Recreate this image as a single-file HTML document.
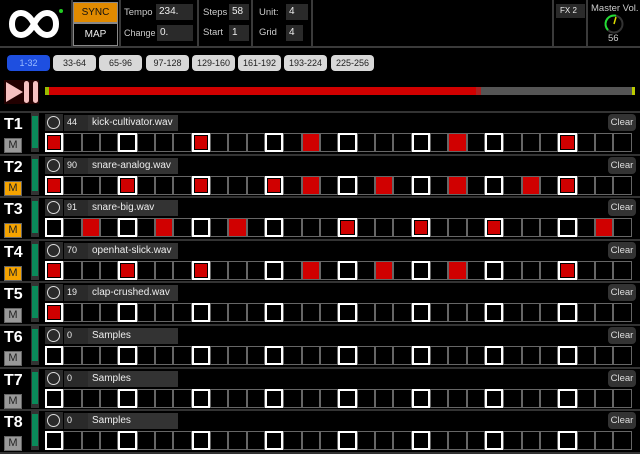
<!DOCTYPE html>
<html><head><style>
*{box-sizing:border-box;margin:0;padding:0}
body{width:640px;height:454px;background:#000;font-family:"Liberation Sans",sans-serif;position:relative;overflow:hidden;color:#ddd}
.a{position:absolute}
.vl{position:absolute;top:0;height:46px;width:2px;background:#3a3a3a}
.lbl{position:absolute;font-size:9.5px;color:#ccc}
.box{position:absolute;background:#2a2a2a;font-size:10px;color:#eee;padding:2px 3px;height:16px}
.tab{position:absolute;top:55px;height:16px;width:43px;background:#d8d8d8;border-radius:4px;font-size:9px;color:#222;text-align:center;line-height:16px}
.cell{position:absolute;width:18.33px;height:19px;border:1px solid #666;background:#000}
.cell.w{border:2px solid #fff}
.cell.r{background:#d00000}
.cell.w.r{background:#000}
.cell.w.r:after{content:"";position:absolute;left:1px;top:1px;right:1px;bottom:1px;background:#d00000}
</style></head><body>
<div class="a" style="left:0;top:46px;width:640px;height:2px;background:#3a3a3a"></div>
<svg class="a" style="left:8px;top:8px" width="52" height="32" viewBox="0 0 52 32"><path d="M26 16 C22 8 17 5 13 5 C7 5 4 10 4 16 C4 22 7 27 13 27 C17 27 22 24 26 16 C30 8 35 5 39 5 C45 5 48 10 48 16 C48 22 45 27 39 27 C35 27 30 24 26 16 Z" fill="none" stroke="#fff" stroke-width="6"/></svg>
<div class="a" style="left:59px;top:9px;width:4px;height:4px;border-radius:2px;background:#2c2"></div>
<div class="vl" style="left:71px"></div>
<div class="a" style="left:73px;top:2px;width:45px;height:21px;background:#e08a00;border:1px solid #888;font-size:10px;color:#111;text-align:center;line-height:19px">SYNC</div>
<div class="a" style="left:73px;top:23px;width:45px;height:23px;border:1px solid #888;font-size:10px;color:#eee;text-align:center;line-height:21px">MAP</div>
<div class="vl" style="left:119px"></div>
<div class="lbl" style="left:124px;top:7px">Tempo</div><div class="box" style="left:156px;top:4px;width:37px">234.</div>
<div class="lbl" style="left:124px;top:28px;font-size:9px">Change</div><div class="box" style="left:157px;top:25px;width:36px">0.</div>
<div class="vl" style="left:197px"></div>
<div class="lbl" style="left:203px;top:7px">Steps</div><div class="box" style="left:229px;top:4px;width:20px">58</div>
<div class="lbl" style="left:203px;top:27px">Start</div><div class="box" style="left:229px;top:25px;width:20px">1</div>
<div class="vl" style="left:251px"></div>
<div class="lbl" style="left:259px;top:7px">Unit:</div><div class="box" style="left:286px;top:4px;width:22px">4</div>
<div class="lbl" style="left:259px;top:27px">Grid</div><div class="box" style="left:286px;top:25px;width:17px">4</div>
<div class="vl" style="left:311px"></div>
<div class="vl" style="left:552px"></div>
<div class="box" style="left:556px;top:4px;width:29px;height:14px;font-size:8px;padding:2px 4px">FX 2</div>
<div class="vl" style="left:586px"></div>
<div class="lbl" style="left:591px;top:3px;font-size:9.5px">Master Vol.</div>
<svg class="a" style="left:603px;top:13px" width="22" height="22"><circle cx="11" cy="11" r="8.5" fill="none" stroke="#333" stroke-width="2"/><path d="M5 17 A8.5 8.5 0 0 1 11 2.5 A8.5 8.5 0 0 1 13 2.7" fill="none" stroke="#2d3" stroke-width="2"/><line x1="11" y1="11" x2="13" y2="4" stroke="#dd0" stroke-width="1.5"/></svg>
<div class="lbl" style="left:608px;top:33px">56</div>
<div class="tab" style="left:7px;background:#1e4fe0;color:#9bf">1-32</div>
<div class="tab" style="left:53px">33-64</div>
<div class="tab" style="left:99px">65-96</div>
<div class="tab" style="left:146px">97-128</div>
<div class="tab" style="left:192px">129-160</div>
<div class="tab" style="left:238px">161-192</div>
<div class="tab" style="left:284px">193-224</div>
<div class="tab" style="left:331px">225-256</div>
<div class="a" style="left:4px;top:80px;width:35px;height:24px;background:#200"></div>
<svg class="a" style="left:4px;top:80px" width="36" height="24"><path d="M2 2 L19 12 L2 22 Z" fill="#f6c0c0"/><rect x="20" y="1" width="5" height="22" rx="2.5" fill="#f6c0c0"/><rect x="29" y="1" width="5" height="22" rx="2.5" fill="#f6c0c0"/></svg>
<div class="a" style="left:45px;top:87px;width:4px;height:8px;background:#9b0"></div>
<div class="a" style="left:49px;top:87px;width:432px;height:8px;background:#d00000"></div>
<div class="a" style="left:476px;top:87px;width:5px;height:8px;background:#a22"></div>
<div class="a" style="left:481px;top:87px;width:151px;height:8px;background:#555"></div>
<div class="a" style="left:632px;top:87px;width:3px;height:8px;background:#bc0"></div>
<div id="rows"></div>
<script>
var data=[
["44","kick-cultivator.wav",[0,8,14,22,28],0],
["90","snare-analog.wav",[0,4,8,12,14,18,22,26,28],1],
["91","snare-big.wav",[2,6,10,16,20,24,30],1],
["70","openhat-slick.wav",[0,4,8,14,18,22,28],1],
["19","clap-crushed.wav",[0],0],
["0","Samples",[],0],["0","Samples",[],0],["0","Samples",[],0]];
var h="";
data.forEach(function(d,i){
 var t=Math.round(111+42.6*i);
 h+='<div class="a" style="left:0;top:'+t+'px;width:640px;height:2px;background:#333"></div>';
 h+='<div class="a" style="left:4px;top:'+(t+5)+'px;font-size:16px;font-weight:bold;color:#fff">T'+(i+1)+'</div>';
 h+='<div class="a" style="left:4px;top:'+(t+27)+'px;width:18px;height:15px;background:'+(d[3]?'#f5a300':'#999')+';border:1px solid #666;font-size:11px;color:#222;text-align:center;line-height:13px">M</div>';
 h+='<div class="a" style="left:31px;top:'+(t+2)+'px;width:8px;height:39px;background:#333"></div>';
 h+='<div class="a" style="left:32px;top:'+(t+5)+'px;width:6px;height:32px;background:#0a8a5a"></div>';
 h+='<div class="a" style="left:45px;top:'+(t+3)+'px;width:18px;height:17px;background:#2a2a2a"></div>';
 h+='<div class="a" style="left:47px;top:'+(t+5)+'px;width:13px;height:13px;border:1.5px solid #ddd;border-radius:50%"></div>';
 h+='<div class="box" style="left:64px;top:'+(t+4)+'px;width:24px;height:16px;font-size:9px">'+d[0]+'</div>';
 h+='<div class="box" style="left:88px;top:'+(t+4)+'px;width:90px;height:16px;background:#333;font-size:10px;padding-left:4px">'+d[1]+'</div>';
 h+='<div class="a" style="left:608px;top:'+(t+3)+'px;width:28px;height:17px;background:#333;border-radius:4px;font-size:9.5px;color:#ddd;text-align:center;line-height:17px">Clear</div>';
 for(var c=0;c<32;c++){
  var cl="cell"+(c%4==0?" w":"")+(d[2].indexOf(c)>=0?" r":"");
  h+='<div class="'+cl+'" style="left:'+(45+c*18.33).toFixed(2)+'px;top:'+(t+22)+'px"></div>';
 }
});
h+='<div class="a" style="left:0;top:452px;width:640px;height:2px;background:#333"></div>';
document.getElementById("rows").innerHTML=h;
</script>
</body></html>
